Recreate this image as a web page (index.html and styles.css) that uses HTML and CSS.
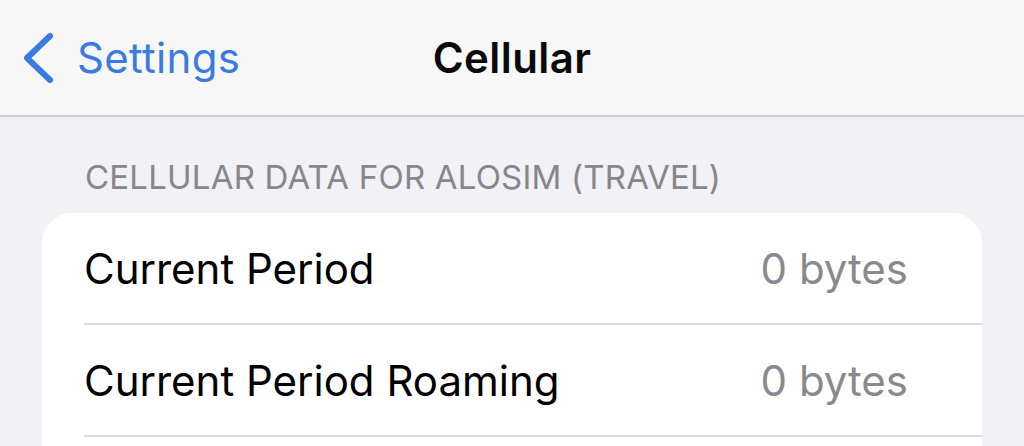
FILE: index.html
```html
<!DOCTYPE html>
<html lang="en">
<head>
<meta charset="utf-8">
<title>Cellular</title>
<link rel="stylesheet" href="styles.css">
</head>
<body>
  <header class="navbar">
    <a class="back" href="#">
      <svg class="chevron" width="34" height="52" viewBox="0 0 34 52" aria-hidden="true">
        <path d="M29 4 L6 26 L29 48" fill="none" stroke="currentColor" stroke-width="6" stroke-linecap="round" stroke-linejoin="round"/>
      </svg>
      <span class="back-label">Settings</span>
    </a>
    <h1 class="title">Cellular</h1>
  </header>

  <main class="content">
    <h2 class="section-header">Cellular Data for ALOSIM (Travel)</h2>
    <ul class="group">
      <li class="row">
        <span class="row-label">Current Period</span>
        <span class="row-value">0 bytes</span>
      </li>
      <li class="row">
        <span class="row-label">Current Period Roaming</span>
        <span class="row-value">0 bytes</span>
      </li>
      <li class="row">
        <span class="row-label"></span>
        <span class="row-value"></span>
      </li>
    </ul>
  </main>
</body>
</html>
```
FILE: styles.css
```css
* { box-sizing: border-box; }

html, body {
  margin: 0;
  padding: 0;
}

body {
  width: 1024px;
  height: 446px;
  overflow: hidden;
  background: #f1f1f6;
  font-family: Inter, "Noto Sans", "Liberation Sans", sans-serif;
  -webkit-font-smoothing: antialiased;
}

/* top navigation bar */
.navbar {
  position: relative;
  height: 117px;
  background: #f7f7f8;
  border-bottom: 2px solid #cfcfd3;
  display: flex;
  align-items: center;
  justify-content: center;
}

.back {
  position: absolute;
  left: 21px;
  top: 0;
  height: 115px;
  display: flex;
  align-items: center;
  gap: 22px;
  color: #3a7be2;
  text-decoration: none;
}

.chevron {
  display: block;
}

.back-label {
  font-size: 42px;
  font-weight: 400;
  letter-spacing: 0.3px;
}

.title {
  margin: 0;
  font-size: 42px;
  font-weight: 600;
  color: #0a0a0a;
  letter-spacing: 0.4px;
}

/* grouped list */
.content {
  padding: 0 42px;
}

.section-header {
  margin: 0;
  padding: 42px 0 17px 43px;
  font-size: 33px;
  line-height: 37px;
  font-weight: 400;
  text-transform: uppercase;
  color: #86868b;
  letter-spacing: 0.2px;
}

.group {
  list-style: none;
  margin: 0;
  padding: 0;
  background: #ffffff;
  border-radius: 30px;
}

.row {
  height: 112px;
  margin-left: 42px;
  padding-right: 74px;
  display: flex;
  align-items: center;
  justify-content: space-between;
  border-bottom: 2px solid #dcdcdf;
  font-size: 42px;
}

.row-label {
  color: #000000;
}

.row-value {
  color: #8a8a8e;
}
```
